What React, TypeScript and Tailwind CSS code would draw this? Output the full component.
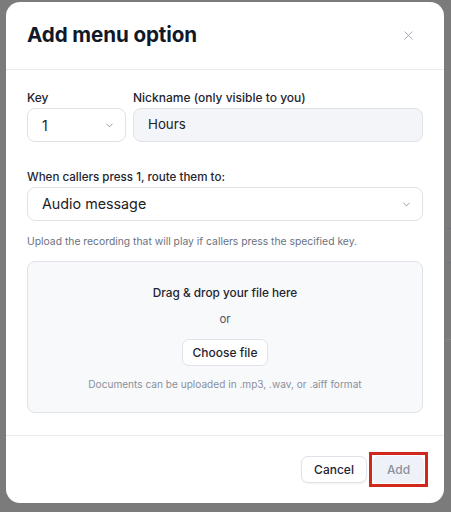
import { X, ChevronDown } from 'lucide-react';

export default function App() {
  return (
    <div
      className="relative w-[451px] h-[512px] overflow-hidden bg-[#7b7b7b]"
      style={{ fontFamily: 'Inter, "Noto Sans", sans-serif' }}
    >
      {/* page behind the overlay */}
      <div className="absolute left-[446px] top-[228px] w-[10px] h-px bg-[#6d7280]" />
      <div className="absolute left-[446px] top-[262px] w-[10px] h-px bg-[#6d7280]" />
      <div className="absolute left-[446px] top-[339px] w-[10px] h-px bg-[#888]" />

      <div className="absolute left-[6px] top-[2px] w-[438px] h-[501px] bg-white rounded-[14px] flex flex-col">
        {/* header */}
        <div className="h-[68px] shrink-0 flex items-center justify-between pl-[21px] pr-[28px] border-b border-[#e8eaef]">
          <h2 className="text-[20.6px] font-bold text-[#111827] tracking-[-0.1px]">Add menu option</h2>
          <X className="w-[15px] h-[15px] text-[#9aa1ad]" strokeWidth={1.4} />
        </div>

        {/* body */}
        <div className="h-[366px] shrink-0 px-[21px] pt-[20px] border-b border-[#e8eaef]">
          <div className="flex gap-[7px]">
            <div className="w-[99px]">
              <label className="block text-[12px] leading-[16px] font-medium text-[#1f2430] mb-[2px]">Key</label>
              <div className="h-[34px] border border-[#dfe2e8] rounded-[8px] flex items-center justify-between pl-[14px] pr-[10px]">
                <span className="text-[14px] text-[#222]">1</span>
                <ChevronDown className="w-[11px] h-[11px] text-[#6b7280]" strokeWidth={1.5} />
              </div>
            </div>
            <div className="flex-1">
              <label className="block text-[12px] leading-[16px] font-medium text-[#1f2430] mb-[2px]">Nickname (only visible to you)</label>
              <div className="h-[34px] border border-[#dfe2e8] bg-[#f3f5f9] rounded-[8px] flex items-center pl-[14px]">
                <span className="text-[13.3px] text-[#222]">Hours</span>
              </div>
            </div>
          </div>

          <label className="block text-[11.6px] leading-[16px] font-medium text-[#1f2430] mt-[27px] mb-[2px]">When callers press 1, route them to:</label>
          <div className="h-[34px] border border-[#dfe2e8] rounded-[8px] flex items-center justify-between pl-[14px] pr-[10px]">
            <span className="text-[14.3px] text-[#222]">Audio message</span>
            <ChevronDown className="w-[11px] h-[11px] text-[#6b7280]" strokeWidth={1.5} />
          </div>

          <p className="mt-[13px] text-[10.35px] leading-[14px] text-[#6b7280]">Upload the recording that will play if callers press the specified key.</p>

          <div className="mt-[13px] h-[152px] bg-[#f8f9fb] border border-[#dfe2e8] rounded-[8px] flex flex-col items-center pt-[23px]">
            <p className="text-[11.8px] leading-[16px] font-medium text-[#1f2430]">Drag &amp; drop your file here</p>
            <p className="mt-[10px] text-[11.5px] leading-[16px] text-[#4b5563]">or</p>
            <button className="mt-[12px] h-[27px] w-[86px] bg-white border border-[#dfe2e8] rounded-[7px] text-[12px] font-medium text-[#1f2430]">
              Choose file
            </button>
            <p className="mt-[11px] text-[10.1px] leading-[14px] text-[#8a909c]">Documents can be uploaded in .mp3, .wav, or .aiff format</p>
          </div>
        </div>

        {/* footer */}
        <div className="flex-1 flex items-center justify-end gap-[2px] pr-[16px]">
          <button className="h-[27px] w-[66px] bg-white border border-[#dfe2e8] rounded-[7px] text-[12px] font-medium text-[#1f2430] shadow-[0_1px_2px_rgba(0,0,0,0.06)]">
            Cancel
          </button>
          <div className="border-[3px] border-[#d0281c] p-px">
            <button className="block h-[27px] w-[51px] bg-[#eef1f7] rounded-[6px] text-[12px] font-medium text-[#8b919d]">
              Add
            </button>
          </div>
        </div>
      </div>
    </div>
  );
}
